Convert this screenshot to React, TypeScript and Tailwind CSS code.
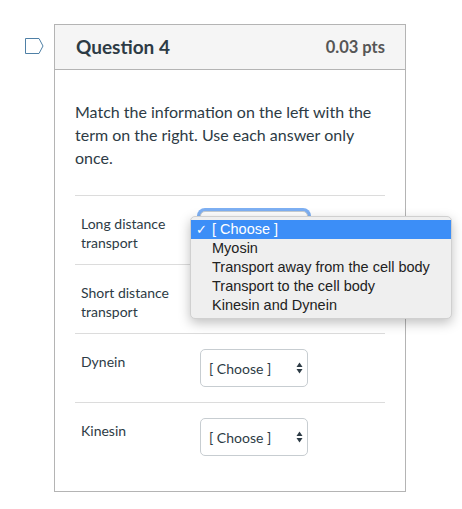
import React from 'react';

const rows = [
  { label: ['Long distance', 'transport'], open: true },
  { label: ['Short distance', 'transport'], open: false },
  { label: ['Dynein'], open: false },
  { label: ['Kinesin'], open: false },
];

const options = [
  '[ Choose ]',
  'Myosin',
  'Transport away from the cell body',
  'Transport to the cell body',
  'Kinesin and Dynein',
];

function Arrows() {
  return (
    <svg width="7" height="12" viewBox="0 0 7 12" className="shrink-0">
      <path d="M3.5 0.5 L6.5 5 H0.5 Z" fill="#2d3b45" />
      <path d="M3.5 11.5 L6.5 7 H0.5 Z" fill="#2d3b45" />
    </svg>
  );
}

function Select({ open }: { open: boolean }) {
  return (
    <div className="relative">
      <div
        className={
          'flex h-[38px] w-[108px] items-center justify-between rounded-[5px] border border-[#c7cdd1] bg-white pl-2 pr-[4px] text-[14px] text-[#2d3b45] ' +
          (open ? 'ring-[3px] ring-[#7eb0f3]' : '')
        }
      >
        <span>[ Choose ]</span>
        <Arrows />
      </div>

      {open && (
        <div className="absolute left-[-10px] top-[5px] z-10 w-[262px] rounded-[5px] border border-[#d0d0d0] bg-[#efefef] py-[3px] shadow-[0_4px_12px_rgba(0,0,0,0.25)] font-['Liberation_Sans',Arial,sans-serif] text-[14.5px] text-[#222]">
          {options.map((opt, i) => (
            <div
              key={opt}
              className={
                'flex h-[19px] items-center leading-[19px] ' +
                (i === 0 ? 'bg-[#3c8ef7] text-white' : 'pl-[21px]')
              }
            >
              {i === 0 && <span className="w-[21px] pl-[5px] text-[13px]">✓</span>}
              <span>{opt}</span>
            </div>
          ))}
        </div>
      )}
    </div>
  );
}

export default function App() {
  return (
    <div className="min-h-[509px] bg-white pl-[25px] pt-[24px] font-['Lato',sans-serif] text-[#2d3b45]">
      <div className="flex items-start gap-[10px]">
        {/* bookmark flag */}
        <svg width="19" height="16" viewBox="0 0 19 16" className="mt-[14px] shrink-0">
          <path d="M0.5 0.5 H14 L18 8 L14 15.5 H0.5 Z" fill="none" stroke="#4f80a6" strokeWidth="1" />
        </svg>

        <div className="w-[352px] border border-[#b4b4b4]">
          {/* Header */}
          <div className="flex h-[45px] items-center justify-between border-b border-[#b4b4b4] bg-[#f5f5f5] pl-[21px] pr-[20px]">
            <h2 className="text-[19px] font-bold text-[#2d3b45]">Question 4</h2>
            <span className="text-[16.5px] font-bold text-[#565656]">0.03 pts</span>
          </div>

          {/* Body */}
          <div className="px-[20px] pb-[20px] pt-[30px]">
            <p className="mb-[26px] text-[16px] leading-[23px]">
              Match the information on the left with the term on the right. Use each answer only once.
            </p>

            {rows.map((row, i) => (
              <div key={i} className="flex items-start border-t border-[#dcdcdc] py-[15px] pl-[6px]">
                <div className="-mb-[3px] w-[119px] pt-[3px] text-[14px] leading-[19px]">
                  {row.label.map((l) => (
                    <div key={l}>{l}</div>
                  ))}
                </div>
                <Select open={row.open} />
              </div>
            ))}
          </div>
        </div>
      </div>
    </div>
  );
}
